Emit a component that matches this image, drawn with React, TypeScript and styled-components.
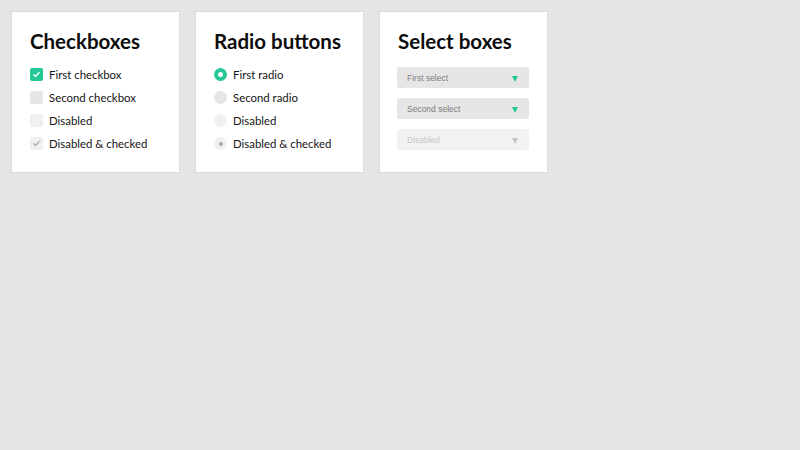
import React from "react";
import styled, { createGlobalStyle } from "styled-components";

const Global = createGlobalStyle`
  html, body { margin: 0; padding: 0; background: #e5e5e5; }
  body { font-family: Lato, "Open Sans", sans-serif; color: #111; }
`;

const Page = styled.div`
  display: flex;
  align-items: flex-start;
  gap: 15px;
  padding: 11px 11px 0;
`;

const Card = styled.div`
  width: 169px;
  height: 162px;
  box-sizing: border-box;
  background: #fff;
  border: 1px solid #dadada;
  padding: 16px 12px 0 18px;
`;

const Title = styled.h2`
  margin: 0 0 9px;
  font-family: Lato, sans-serif;
  font-size: 20.5px;
  font-weight: 700;
  line-height: 26px;
  white-space: nowrap;
  color: #0d0d0d;
`;

const List = styled.div`
  display: flex;
  flex-direction: column;
`;

const Row = styled.label`
  display: flex;
  align-items: center;
  height: 23px;
  gap: 6px;
  font-size: 11.4px;
  white-space: nowrap;
  color: #151515;
`;

const Box = styled.span<{ $checked?: boolean; $disabled?: boolean }>`
  width: 13px;
  height: 13px;
  border-radius: 2px;
  display: flex;
  align-items: center;
  justify-content: center;
  background: ${(p) => (p.$checked && !p.$disabled ? "#24c896" : p.$disabled ? "#f0f0f0" : "#e6e6e6")};
`;

const Radio = styled.span<{ $checked?: boolean; $disabled?: boolean }>`
  width: 13px;
  height: 13px;
  border-radius: 50%;
  display: flex;
  align-items: center;
  justify-content: center;
  background: ${(p) => (p.$checked && !p.$disabled ? "#24c896" : p.$disabled ? "#f0f0f0" : "#e6e6e6")};
`;

const Dot = styled.span<{ $disabled?: boolean }>`
  width: ${(p) => (p.$disabled ? 4 : 5)}px;
  height: ${(p) => (p.$disabled ? 4 : 5)}px;
  border-radius: 50%;
  background: ${(p) => (p.$disabled ? "#aaa" : "#fff")};
`;

const Selects = styled.div`
  display: flex;
  flex-direction: column;
  gap: 10px;
  padding-top: 4px;
  margin-left: -1px;
`;

const Select = styled.div<{ $disabled?: boolean }>`
  width: 132px;
  height: 21px;
  box-sizing: border-box;
  border-radius: 2px;
  display: flex;
  align-items: center;
  justify-content: space-between;
  padding: 0 10px 0 10px;
  font-family: "Liberation Sans", Arial, sans-serif;
  font-size: 8.5px;
  background: ${(p) => (p.$disabled ? "#f2f2f2" : "#e6e6e6")};
  color: ${(p) => (p.$disabled ? "#c8c8c8" : "#808080")};
`;

const Arrow = styled.span<{ $disabled?: boolean }>`
  width: 0;
  height: 0;
  border-left: 3.5px solid transparent;
  border-right: 3.5px solid transparent;
  border-top: 6px solid ${(p) => (p.$disabled ? "#c4c4c4" : "#24c896")};
  margin-top: 2px;
  margin-right: 1px;
`;

const Check = ({ color }: { color: string }) => (
  <svg width="9" height="9" viewBox="0 0 10 10">
    <path d="M2 5.2 L4.1 7.2 L8 2.8" fill="none" stroke={color} strokeWidth="1.4" strokeLinecap="round" strokeLinejoin="round" />
  </svg>
);

export default function App() {
  return (
    <>
      <Global />
      <Page>
        <Card>
          <Title>Checkboxes</Title>
          <List>
            <Row><Box $checked><Check color="#fff" /></Box>First checkbox</Row>
            <Row><Box />Second checkbox</Row>
            <Row><Box $disabled />Disabled</Row>
            <Row><Box $disabled $checked><Check color="#b0b0b0" /></Box>Disabled &amp; checked</Row>
          </List>
        </Card>
        <Card>
          <Title>Radio buttons</Title>
          <List>
            <Row><Radio $checked><Dot /></Radio>First radio</Row>
            <Row><Radio />Second radio</Row>
            <Row><Radio $disabled />Disabled</Row>
            <Row><Radio $disabled $checked><Dot $disabled /></Radio>Disabled &amp; checked</Row>
          </List>
        </Card>
        <Card>
          <Title>Select boxes</Title>
          <Selects>
            <Select>First select<Arrow /></Select>
            <Select>Second select<Arrow /></Select>
            <Select $disabled>Disabled<Arrow $disabled /></Select>
          </Selects>
        </Card>
      </Page>
    </>
  );
}
